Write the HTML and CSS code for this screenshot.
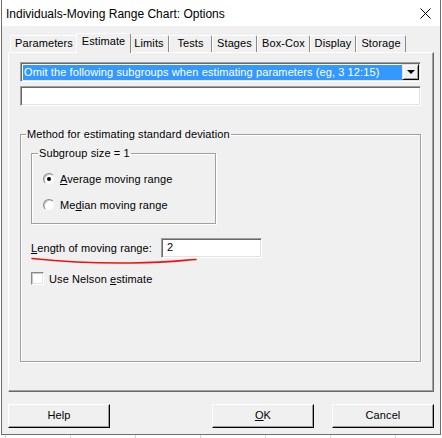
FILE: index.html
```html
<!DOCTYPE html>
<html>
<head>
<meta charset="utf-8">
<link rel="stylesheet" href="styles.css">
</head>
<body>
<div class="window">
  <div class="titlebar">
    <span class="title">Individuals-Moving Range Chart: Options</span>
    <svg class="close" width="11" height="11" viewBox="0 0 11 11"><path d="M0.5 0.5 L10.5 10.5 M10.5 0.5 L0.5 10.5" stroke="#000" stroke-width="1"/></svg>
  </div>
  <div class="body">
    <div class="tabs">
      <div class="tab w-par">Parameters</div>
      <div class="tab sel w-est">Estimate</div>
      <div class="tab w-lim">Limits</div>
      <div class="tab w-tes">Tests</div>
      <div class="tab w-sta">Stages</div>
      <div class="tab w-box">Box-Cox</div>
      <div class="tab w-dis">Display</div>
      <div class="tab w-sto">Storage</div>
    </div>
    <div class="panel">
      <div class="combo">
        <div class="combo-value">Omit the following subgroups when estimating parameters (eg, 3 12:15)</div>
        <div class="combo-btn"><span class="arrow"></span></div>
      </div>
      <div class="textbox"></div>
      <fieldset class="group outer">
        <legend>Method for estimating standard deviation</legend>
        <fieldset class="group inner">
          <legend>Subgroup size = 1</legend>
          <div class="opt first"><span class="radio on"></span><span><u>A</u>verage moving range</span></div>
          <div class="opt second"><span class="radio"></span><span>Me<u>d</u>ian moving range</span></div>
        </fieldset>
        <div class="lenrow">
          <span class="lenlabel"><u>L</u>ength of moving range:</span>
          <span class="lenbox">2</span>
          <svg class="redline" width="180" height="10" viewBox="0 0 180 10"><path d="M1 1.5 C 30 4.5, 60 6.5, 100 6 S 150 3.5, 165 2.5" fill="none" stroke="#f01010" stroke-width="1.6" stroke-linecap="round"/></svg>
        </div>
        <div class="chkrow"><span class="check"></span><span>Use Nelson <u>e</u>stimate</span></div>
      </fieldset>
    </div>
    <div class="buttons">
      <div class="btn">Help</div>
      <div class="btn ok"><u>O</u>K</div>
      <div class="btn">Cancel</div>
    </div>
  </div>
</div>
</body>
</html>
```
FILE: styles.css
```css
html, body {
  margin: 0;
  padding: 0;
}
body {
  width: 442px;
  height: 438px;
  overflow: hidden;
  background-color: #fff;
  background-image: repeating-linear-gradient(90deg, transparent 0, transparent 5px, #d4d4d4 5px, #d4d4d4 6px, transparent 6px, transparent 65px);
  font-family: "Liberation Sans", Arial, sans-serif;
  font-size: 11px;
  letter-spacing: 0.1px;
  color: #000;
}
.window {
  margin-left: 1px;
  width: 440px;
  height: 435px;
  box-sizing: border-box;
  border: 1px solid #6e6e6e;
  border-top: none;
  background: #f0f0f0;
  display: flex;
  flex-direction: column;
}
.titlebar {
  height: 26px;
  background: #fff;
  display: flex;
  align-items: center;
  justify-content: space-between;
  padding: 0 9px 0 4px;
  flex: none;
}
.title {
  font-size: 12px;
  letter-spacing: 0;
  color: #000;
  padding-top: 1px;
}
.close {
  display: block;
}
.body {
  padding: 7px 6px 0 6px;
  flex: 1;
  display: flex;
  flex-direction: column;
}
.tabs {
  display: flex;
  align-items: flex-end;
  height: 19px;
  padding-left: 2px;
}
.tab {
  box-sizing: border-box;
  height: 17px;
  border-top: 1px solid #fff;
  border-left: 1px solid #fff;
  border-right: 1px solid #8a8a8a;
  border-top-left-radius: 2px;
  border-top-right-radius: 2px;
  text-align: center;
  line-height: 15px;
  background: #f0f0f0;
  white-space: nowrap;
}
.tab.sel {
  height: 20px;
  margin: 0 -2px -1px -2px;
  position: relative;
  z-index: 1;
  line-height: 15px;
  padding-bottom: 3px;
}
.w-par { width: 68px; }
.w-est { width: 55px; }
.w-lim { width: 40px; }
.w-tes { width: 43px; }
.w-sta { width: 45px; }
.w-box { width: 53px; }
.w-dis { width: 46px; }
.w-sto { width: 50px; }

.panel {
  box-sizing: border-box;
  width: 426px;
  height: 340px;
  border-top: 1px solid #fff;
  border-left: 1px solid #fff;
  border-right: 1px solid #696969;
  border-bottom: 1px solid #696969;
  box-shadow: inset -1px -1px 0 #a0a0a0;
  padding: 9px 0 0 11px;
}
.combo {
  box-sizing: border-box;
  width: 401px;
  height: 20px;
  border-top: 1px solid #a0a0a0;
  border-left: 1px solid #a0a0a0;
  border-right: 1px solid #fff;
  border-bottom: 1px solid #fff;
  box-shadow: inset 1px 1px 0 #696969, inset -1px -1px 0 #e3e3e3;
  background: #fff;
  display: flex;
  padding: 2px 1px 1px 2px;
}
.combo-value {
  flex: 1;
  background: #3399ff;
  color: #fff;
  line-height: 15px;
  padding-left: 1px;
  white-space: nowrap;
  overflow: hidden;
}
.combo-btn {
  box-sizing: border-box;
  width: 17px;
  height: 16px;
  margin-top: -1px;
  background: #f0f0f0;
  border-top: 1px solid #e3e3e3;
  border-left: 1px solid #e3e3e3;
  border-right: 1px solid #000;
  border-bottom: 1px solid #000;
  box-shadow: inset 1px 1px 0 #fff, inset -1px -1px 0 #a0a0a0;
  display: flex;
  align-items: center;
  justify-content: center;
}
.arrow {
  width: 0;
  height: 0;
  border-left: 4px solid transparent;
  border-right: 4px solid transparent;
  border-top: 4px solid #000;
  margin-left: 1px;
}
.textbox {
  box-sizing: border-box;
  width: 401px;
  height: 20px;
  margin-top: 4px;
  background: #fff;
  border-top: 1px solid #a0a0a0;
  border-left: 1px solid #a0a0a0;
  border-right: 1px solid #fff;
  border-bottom: 1px solid #fff;
  box-shadow: inset 1px 1px 0 #696969, inset -1px -1px 0 #e3e3e3;
}
.group {
  margin: 0;
  padding: 0;
  border: 1px solid #a0a0a0;
  box-shadow: 1px 1px 0 #fff, inset 1px 1px 0 #fff;
  min-width: 0;
}
.group legend {
  padding: 0 1px;
  margin-left: 5px;
  line-height: 13px;
}
.outer {
  margin-top: 22px;
  width: 401px;
  box-sizing: border-box;
  padding-bottom: 76px;
}
.inner {
  margin: 6px 0 0 10px;
  width: 185px;
  box-sizing: border-box;
  padding-bottom: 10px;
}
.inner legend {
  margin-left: 6px;
}
.opt {
  display: flex;
  align-items: center;
  height: 16px;
  padding-left: 11px;
}
.opt.first { margin-top: 11px; }
.opt.second { margin-top: 10px; }
.radio {
  box-sizing: border-box;
  width: 12px;
  height: 12px;
  border-radius: 50%;
  background: #fff;
  border: 1px solid;
  border-color: #8a8a8a #f0f0f0 #f0f0f0 #8a8a8a;
  box-shadow: inset 1px 1px 0 #c8c8c8;
  margin-right: 5px;
  display: flex;
  align-items: center;
  justify-content: center;
}
.radio.on::after {
  content: "";
  width: 4px;
  height: 4px;
  border-radius: 50%;
  background: #000;
}
.lenrow {
  position: relative;
  display: flex;
  align-items: center;
  margin: 14px 0 0 10px;
  height: 20px;
}
.lenlabel {
  width: 130px;
}
.lenbox {
  box-sizing: border-box;
  width: 101px;
  height: 20px;
  background: #fff;
  border-top: 1px solid #a0a0a0;
  border-left: 1px solid #a0a0a0;
  border-right: 1px solid #fff;
  border-bottom: 1px solid #fff;
  box-shadow: inset 1px 1px 0 #696969, inset -1px -1px 0 #e3e3e3;
  padding-left: 5px;
  line-height: 17px;
}
.redline {
  position: absolute;
  left: 0;
  top: 19px;
}
.chkrow {
  display: flex;
  align-items: center;
  margin: 14px 0 0 10px;
  height: 13px;
}
.check {
  box-sizing: border-box;
  width: 13px;
  height: 13px;
  background: #fff;
  border-top: 1px solid #8a8a8a;
  border-left: 1px solid #8a8a8a;
  border-right: 1px solid #fff;
  border-bottom: 1px solid #fff;
  box-shadow: inset 1px 1px 0 #c8c8c8, inset -1px -1px 0 #e3e3e3;
  margin-right: 5px;
}
.buttons {
  display: flex;
  margin-top: 12px;
  gap: 18px;
}
.btn {
  box-sizing: border-box;
  width: 102px;
  height: 24px;
  border: 1px solid;
  border-color: #fff #000 #000 #fff;
  box-shadow: inset -1px -1px 0 #a0a0a0;
  background: #f0f0f0;
  text-align: center;
  line-height: 21px;
}
.btn.ok {
  margin-left: auto;
}
```
